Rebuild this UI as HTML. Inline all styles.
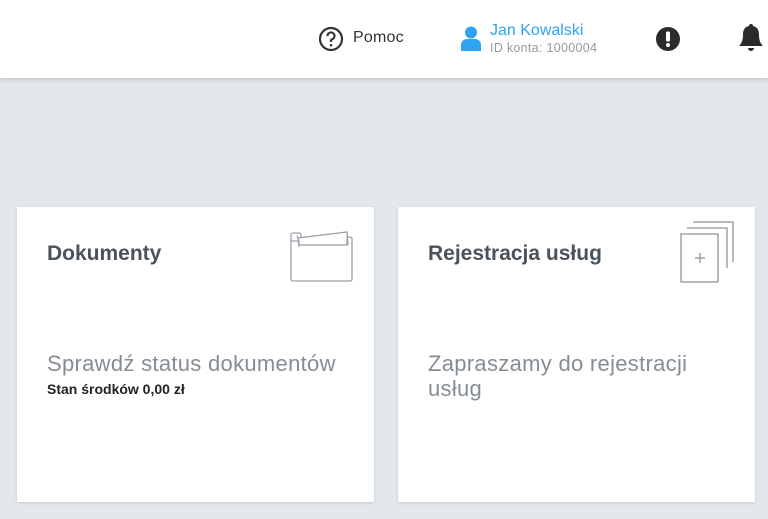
<!DOCTYPE html>
<html><head><meta charset="utf-8"><style>
body{margin:0;width:768px;height:519px;background:#e5e8eb;font-family:"Liberation Sans",sans-serif;overflow:hidden;position:relative}
.hdr{position:absolute;left:0;top:0;width:768px;height:78px;background:#fff;box-shadow:0 2px 4px rgba(0,0,0,.15)}
.card{position:absolute;top:207px;width:357px;height:295px;background:#fff;box-shadow:0 1px 3px rgba(0,0,0,.12)}
.t{position:absolute;left:30px;top:35px;font-size:21px;font-weight:bold;color:#4a525a;letter-spacing:0px}
.s{position:absolute;left:30px;top:144px;font-size:22px;color:#858d94;line-height:25px;letter-spacing:0.3px}
.b{position:absolute;left:30px;top:174px;font-size:14px;color:#222;font-weight:bold;letter-spacing:0px}
</style></head><body>
<div class="hdr">
<svg style="position:absolute;left:318px;top:26px" width="26" height="26" viewBox="0 0 26 26"><circle cx="13" cy="13" r="11" fill="none" stroke="#333" stroke-width="2.2"/><path d="M9.5 10a3.5 3.5 0 1 1 4.5 3.3c-.8.3-1 .8-1 1.7v1" fill="none" stroke="#333" stroke-width="2.2"/><circle cx="13" cy="19.3" r="1.3" fill="#333"/></svg>
<div style="position:absolute;left:353px;top:29px;font-size:16px;color:#333;letter-spacing:0.2px">Pomoc</div>
<svg style="position:absolute;left:460px;top:26px" width="22" height="25" viewBox="0 0 22 25"><circle cx="11" cy="6.5" r="6" fill="#2ea3f2"/><path d="M1 25v-6a6 6 0 0 1 6-6h8a6 6 0 0 1 6 6v6z" fill="#2ea3f2"/></svg>
<div style="position:absolute;left:490px;top:22px;font-size:16px;color:#2ea3f2">Jan Kowalski</div>
<div style="position:absolute;left:490px;top:41px;font-size:12.5px;color:#999;letter-spacing:0.3px">ID konta: 1000004</div>
<svg style="position:absolute;left:655px;top:26px" width="26" height="26" viewBox="0 0 26 26"><circle cx="13" cy="13" r="12" fill="#2b2b2b"/><rect x="11" y="5.5" width="4" height="10" rx="1.5" fill="#fff"/><circle cx="13" cy="19" r="2" fill="#fff"/></svg>
<svg style="position:absolute;left:737px;top:23px" width="28" height="30" viewBox="0 0 28 30"><path d="M14 1c-1.5 0-2 1-2 2C7 4 6 8 6 12c0 6-2 9-4 11h24c-2-2-4-5-4-11 0-4-1-8-6-9 0-1-.5-2-2-2z" fill="#2b2b2b"/><path d="M11 25a3 3 0 0 0 6 0z" fill="#2b2b2b"/></svg>
</div>
<div class="card" style="left:17px">
<div class="t">Dokumenty</div>
<svg style="position:absolute;left:272px;top:16px" width="66" height="62" viewBox="0 0 66 62" fill="none" stroke="#9aa1a8" stroke-width="1.3"><path d="M2 18V12a2 2 0 0 1 2-2h6a2 2 0 0 1 2 2v2"/><path d="M10 24l-1-9 49-6 1 13"/><path d="M9 16l-1-3"/><path d="M2 18h8v4h48v-8h3a2 2 0 0 1 2 2v40a2 2 0 0 1-2 2H4a2 2 0 0 1-2-2z"/></svg>
<div class="s">Sprawdź status dokumentów</div>
<div class="b">Stan środków 0,00 zł</div>
</div>
<div class="card" style="left:398px">
<div class="t">Rejestracja usług</div>
<svg style="position:absolute;left:281px;top:14px" width="58" height="64" viewBox="0 0 58 64" fill="none" stroke="#8d949b" stroke-width="1.3"><path d="M14 1h40v40M8 7h40v40M2 13h37v48H2z"/><path d="M21 32v10M16 37h10" /></svg>
<div class="s">Zapraszamy do rejestracji<br>usług</div>
</div>
</body></html>
